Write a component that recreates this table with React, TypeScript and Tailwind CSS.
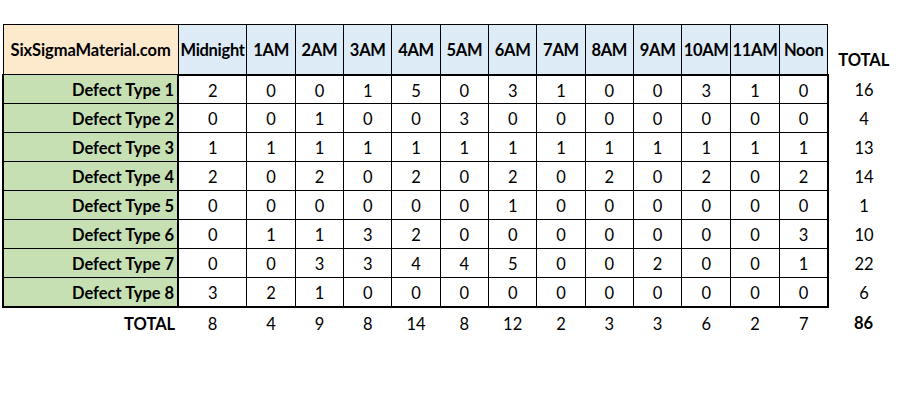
import React from "react";

const hours = ["Midnight", "1AM", "2AM", "3AM", "4AM", "5AM", "6AM", "7AM", "8AM", "9AM", "10AM", "11AM", "Noon"];
const data: number[][] = [
  [2, 0, 0, 1, 5, 0, 3, 1, 0, 0, 3, 1, 0],
  [0, 0, 1, 0, 0, 3, 0, 0, 0, 0, 0, 0, 0],
  [1, 1, 1, 1, 1, 1, 1, 1, 1, 1, 1, 1, 1],
  [2, 0, 2, 0, 2, 0, 2, 0, 2, 0, 2, 0, 2],
  [0, 0, 0, 0, 0, 0, 1, 0, 0, 0, 0, 0, 0],
  [0, 1, 1, 3, 2, 0, 0, 0, 0, 0, 0, 0, 3],
  [0, 0, 3, 3, 4, 4, 5, 0, 0, 2, 0, 0, 1],
  [3, 2, 1, 0, 0, 0, 0, 0, 0, 0, 0, 0, 0],
];
const rowTotals = [16, 4, 13, 14, 1, 10, 22, 6];
const colTotals = [8, 4, 9, 8, 14, 8, 12, 2, 3, 3, 6, 2, 7];

export default function App() {
  return (
    <div className="w-[899px] h-[406px] bg-white pt-[24px] pl-[2px] text-black text-[16.5px] leading-none" style={{ fontFamily: "Lato, 'Open Sans', sans-serif" }}>
      <table className="table-fixed border-collapse">
        <colgroup>
          <col className="w-[176px]" />
          <col className="w-[69px]" />
          {hours.slice(1).map((h) => (
            <col key={h} className="w-[49px]" />
          ))}
          <col className="w-[72px]" />
        </colgroup>
        <thead>
          <tr className="h-[50px]">
            <th className="border border-black bg-[#fde9cc] font-bold text-center p-0 pt-[2px] tracking-[-0.1px]">SixSigmaMaterial.com</th>
            {hours.map((h) => (
              <th key={h} className="border border-black border-b-2 bg-[#ddebf7] font-bold text-center p-0 pt-[2px] whitespace-nowrap tracking-[-0.3px]">
                {h}
              </th>
            ))}
            <th className="align-bottom font-bold text-center p-0 pb-[6px]">TOTAL</th>
          </tr>
        </thead>
        <tbody>
          {data.map((row, i) => (
            <tr key={i} className="h-[29px]">
              <td
                className={`bg-[#c6e0b4] font-bold text-right p-0 pr-[3px] pt-[3px] border border-black border-l-2 border-r-2 ${
                  i === data.length - 1 ? "border-b-2" : ""
                }`}
              >
                Defect Type {i + 1}
              </td>
              {row.map((v, j) => (
                <td
                  key={j}
                  className={`border border-black text-center p-0 pt-[3px] ${j === row.length - 1 ? "border-r-2" : ""} ${
                    i === data.length - 1 ? "border-b-2" : ""
                  }`}
                >
                  {v}
                </td>
              ))}
              <td className="text-center p-0 pt-[3px]">{rowTotals[i]}</td>
            </tr>
          ))}
          <tr className="h-[31px]">
            <td className="font-bold text-right p-0 pr-[3px] pt-[3px]">TOTAL</td>
            {colTotals.map((v, j) => (
              <td key={j} className="text-center p-0 pt-[3px]">
                {v}
              </td>
            ))}
            <td className="text-center p-0 pt-[3px] font-bold">86</td>
          </tr>
        </tbody>
      </table>
    </div>
  );
}
